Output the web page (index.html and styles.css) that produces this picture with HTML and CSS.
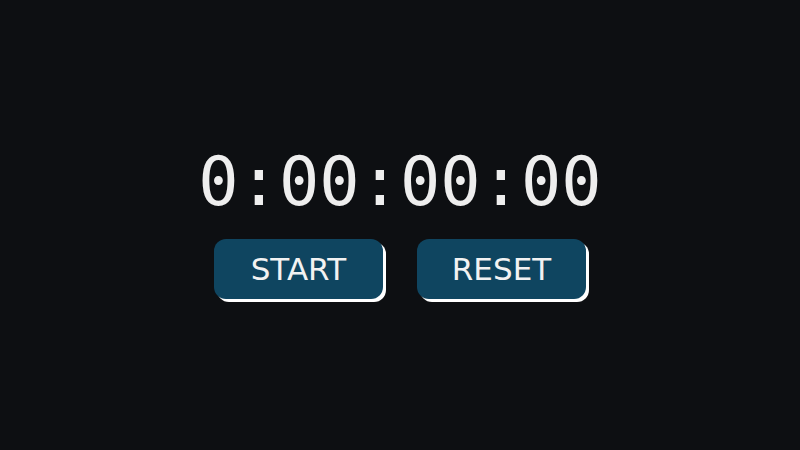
FILE: index.html
```html
<!DOCTYPE html>
<html lang="en">
<head>
    <meta charset="UTF-8">
    <meta name="viewport" content="width=device-width, initial-scale=1.0">
    <title>Stopwatch</title>
    <link rel="stylesheet" href="styles.css">
</head>
<body>
    <div class="stopwatch">
        <div class="time" id="display">0:00:00:00</div>
        <div class="controls">
            <button class="btn" id="startBtn">START</button>
            <button class="btn" id="resetBtn">RESET</button>
        </div>
    </div>
</body>
</html>
```

FILE: styles.css
```css
body {
    margin: 0;
    height: 100vh;
    background: #0d0f12;
    display: flex;
    justify-content: center;
    align-items: center;
    font-family: "DejaVu Sans", sans-serif;
}
.stopwatch {
    display: flex;
    flex-direction: column;
    align-items: center;
    gap: 19px;
    padding-bottom: 5px;
}
.time {
    font-family: "DejaVu Sans Mono", monospace;
    font-size: 67px;
    line-height: 1.1;
    color: #eeeeee;
}
.controls {
    display: flex;
    gap: 34px;
}
.btn {
    width: 169px;
    height: 60px;
    background: #0f4560;
    color: #f2f2f2;
    border: none;
    border-radius: 12px;
    box-shadow: 3px 3px 0 #ffffff;
    font-family: "DejaVu Sans", sans-serif;
    font-size: 31px;
    cursor: pointer;
}
```
